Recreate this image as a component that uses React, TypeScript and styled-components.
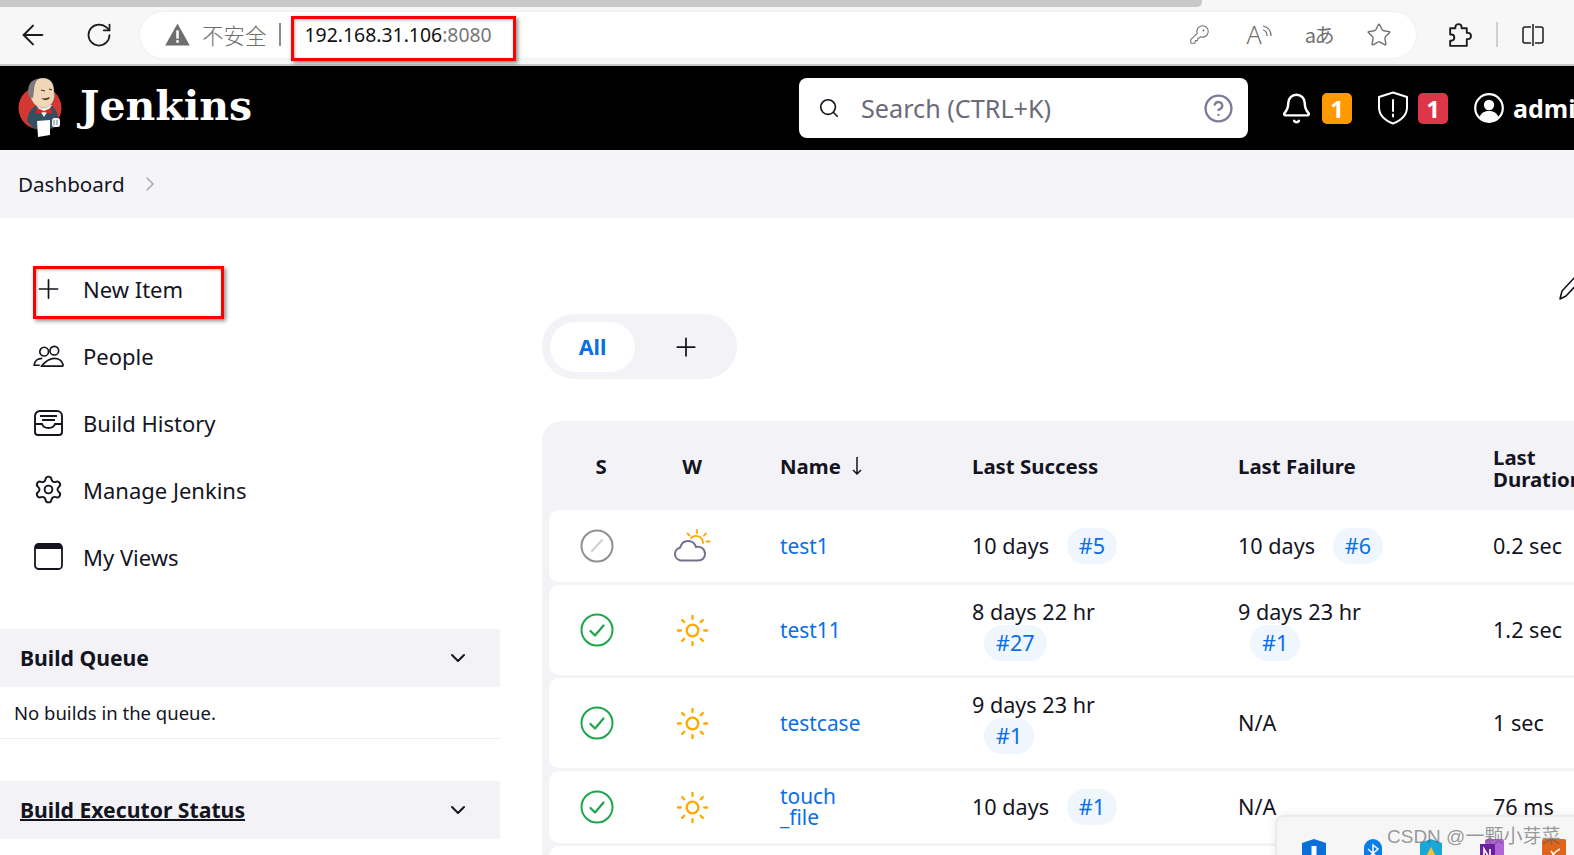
import styled, { createGlobalStyle } from "styled-components";
import {
  ArrowLeft,
  Bell,
  ChevronDown,
  ChevronRight,
  CircleHelp,
  KeyRound,
  Plus,
  RotateCw,
  Search,
  Settings,
  Star,
  Sun,
} from "lucide-react";

const INK = "#14141f";
const BLUE = "#0a6fe6";
const PANEL = "#f2f2f7";
const COLUMNS = "104px 78px 241px 266px 255px 240px";

const GlobalStyle = createGlobalStyle`
  html, body { margin: 0; padding: 0; background: #fff; }
  body { font-family: "Noto Sans", "Noto Sans CJK SC", sans-serif; color: ${INK}; }
  * { box-sizing: border-box; }
`;

const Page = styled.div`
  position: relative;
  width: 1574px;
  height: 855px;
  overflow: hidden;
  background: #fff;
`;

/* browser chrome */
const TabStrip = styled.div`
  height: 7px;
  background: #f7f7f7;
`;
const TabThumb = styled.div`
  width: 1202px;
  height: 7px;
  background: #c9c9c9;
  border-bottom-right-radius: 5px;
`;
const Toolbar = styled.div`
  display: flex;
  align-items: center;
  height: 59px;
  background: #f7f7f7;
  border-bottom: 2px solid #c8c8c8;
  padding-bottom: 2px;
`;
const ToolButton = styled.div`
  display: flex;
  align-items: center;
  justify-content: center;
  width: 66px;
  color: #1c1c1c;
`;
const AddressPill = styled.div`
  display: flex;
  align-items: center;
  width: 1276px;
  height: 46px;
  margin-left: 8px;
  padding: 0 7px 0 25px;
  border-radius: 23px;
  background: #fff;
  box-shadow: 0 0 3px rgba(0, 0, 0, 0.06);
`;
const NotSecure = styled.span`
  margin-left: 12px;
  font-size: 21.5px;
  font-weight: 300;
  color: #6f6f6f;
`;
const PillDivider = styled.div`
  width: 2px;
  height: 23px;
  margin: 0 24px 0 12px;
  background: #8c8c8c;
`;
const Url = styled.span`
  flex: 1;
  font-size: 19.4px;
  color: #111;
`;
const UrlPort = styled.span`
  color: #777;
`;
const PillAction = styled.div`
  display: flex;
  align-items: center;
  justify-content: center;
  width: 60px;
  color: #707070;
`;
const ReadAloudLetter = styled.span`
  font-size: 25px;
  font-weight: 300;
  line-height: 1;
`;
const TranslateGlyph = styled.span`
  font-family: "Noto Sans CJK JP", sans-serif;
  font-size: 20px;
  font-weight: 400;
  letter-spacing: -1.5px;
`;
const ToolbarEnd = styled.div`
  display: flex;
  align-items: center;
  margin-left: 30px;
  color: #1c1c1c;
`;
const ToolDivider = styled.div`
  width: 2px;
  height: 25px;
  margin: 0 23px 0 24px;
  background: #cfcfcf;
`;

/* jenkins header */
const Header = styled.header`
  display: flex;
  align-items: center;
  height: 84px;
  padding-left: 18px;
  background: #000;
  color: #fff;
  & > * {
    flex-shrink: 0;
  }
`;
const Wordmark = styled.span`
  width: 189px;
  margin: 0 0 4px 16px;
  font-family: "DejaVu Serif", serif;
  font-size: 41px;
  font-weight: 700;
  white-space: nowrap;
`;
const SearchBox = styled.div`
  display: flex;
  align-items: center;
  width: 449px;
  height: 60px;
  margin-left: 530px;
  padding: 0 14px 0 19px;
  border-radius: 8px;
  background: #fff;
  color: ${INK};
`;
const SearchHint = styled.span`
  flex: 1;
  margin-left: 21px;
  margin-bottom: 1px;
  font-size: 25.2px;
  color: #6b6b78;
`;
const HeaderAction = styled.div`
  display: flex;
  align-items: center;
  margin-left: ${(p: { $gap: number }) => p.$gap}px;
`;
const CountBadge = styled.span<{ $tone: string }>`
  display: flex;
  align-items: center;
  justify-content: center;
  width: 30px;
  height: 31px;
  margin-left: 9px;
  border-radius: 5px;
  background: ${(p) => p.$tone};
  font-size: 24px;
  font-weight: 700;
`;
const UserName = styled.span`
  margin-left: 9px;
  font-size: 25px;
  font-weight: 700;
  white-space: nowrap;
`;

/* breadcrumb */
const Breadcrumb = styled.nav`
  display: flex;
  align-items: center;
  height: 68px;
  padding-left: 18px;
  background: #f5f5f8;
  font-size: 20.6px;
  color: ${INK};
`;
const CrumbArrow = styled.span`
  display: flex;
  margin-left: 13px;
  color: #a9a9b8;
`;

/* page body */
const Body = styled.div`
  display: flex;
`;
const Sidebar = styled.aside`
  flex: 0 0 500px;
  padding-top: 38px;
`;
const TaskList = styled.ul`
  margin: 0 0 39px;
  padding: 0 0 0 33px;
  list-style: none;
`;
const Task = styled.li`
  display: flex;
  align-items: center;
  height: 66.8px;
  font-size: 22px;
`;
const TaskIcon = styled.span`
  display: flex;
  justify-content: center;
  width: 31px;
  margin-right: 19px;
`;
const PaneHead = styled.div`
  display: flex;
  align-items: center;
  justify-content: space-between;
  height: 58px;
  padding: 0 30px 0 20px;
  background: ${PANEL};
  font-size: 21.2px;
  font-weight: 700;
`;
const PaneLink = styled.span`
  text-decoration: underline;
  text-decoration-thickness: 2px;
`;
const PaneBody = styled.div`
  display: flex;
  align-items: center;
  height: 52px;
  margin-bottom: 42px;
  padding-left: 14px;
  border-bottom: 1px solid #f0f0f3;
  font-size: 18.5px;
`;

const Main = styled.main`
  flex: 1;
  min-width: 0;
  margin-left: 42px;
  padding-top: 57px;
  overflow: hidden;
`;
const EditRow = styled.div`
  display: flex;
  justify-content: flex-end;
  height: 39px;
  margin-right: -14px;
`;
const Tabs = styled.div`
  display: inline-flex;
  align-items: center;
  width: 195px;
  height: 65px;
  padding: 0 8px;
  border-radius: 33px;
  background: ${PANEL};
`;
const ActiveTab = styled.span`
  display: flex;
  align-items: center;
  justify-content: center;
  width: 85px;
  height: 50px;
  border-radius: 25px;
  background: #fff;
  color: ${BLUE};
  font-size: 21.5px;
  font-weight: 700;
`;
const AddTab = styled.span`
  display: flex;
  margin-left: 36px;
`;
const Table = styled.section`
  width: 1120px;
  margin-top: 42px;
  padding: 0 0 0 7px;
  border-radius: 20px 0 0 0;
  background: ${PANEL};
`;
const HeadRow = styled.div`
  display: grid;
  grid-template-columns: ${COLUMNS};
  align-items: center;
  height: 89px;
  font-size: 20.4px;
  font-weight: 700;
  line-height: 22px;
`;
const Row = styled.div`
  display: grid;
  grid-template-columns: ${COLUMNS};
  align-items: center;
  min-height: 72px;
  margin-bottom: 3px;
  padding: 14px 0;
  border-radius: 10px 0 0 10px;
  background: #fff;
  font-size: 21.6px;
  line-height: 26px;
`;
const CenterHead = styled.div`
  text-align: center;
`;
const NameHead = styled.div`
  display: flex;
  align-items: center;
  padding-left: 49px;
`;
const DurationHead = styled.div`
  padding-top: 5px;
`;
const SortArrow = styled.span`
  display: flex;
  margin-left: 9px;
`;
const StatusCell = styled.div`
  display: flex;
  padding-left: 31px;
`;
const WeatherCell = styled.div`
  display: flex;
  justify-content: center;
`;
const JobLink = styled.a`
  padding-left: 49px;
  color: ${BLUE};
  font-size: 20.9px;
  line-height: 21px;
`;
const TimeCell = styled.div`
  padding-right: 80px;
`;
const BuildChip = styled.span`
  display: inline-block;
  margin-left: 12px;
  padding: 5px 12px;
  border-radius: 18px;
  background: #f0f6fe;
  color: ${BLUE};
`;

/* overlays on top of the screenshot */
const AddressMark = styled.div`
  position: absolute;
  left: 291px;
  top: 16px;
  width: 225px;
  height: 45px;
  border: 3px solid #f00;
  box-shadow: 2px 2px 4px rgba(0, 0, 0, 0.45), inset 1px 1px 3px rgba(0, 0, 0, 0.3);
`;
const ItemMark = styled.div`
  position: absolute;
  left: 33px;
  top: 266px;
  width: 191px;
  height: 53px;
  border: 3px solid #f00;
  box-shadow: 2px 2px 4px rgba(0, 0, 0, 0.45), inset 1px 1px 3px rgba(0, 0, 0, 0.3);
`;
const TrayPopup = styled.div`
  position: absolute;
  left: 1275px;
  top: 815px;
  display: flex;
  gap: 38px;
  width: 320px;
  height: 60px;
  padding: 22px 0 0 25px;
  border: 2px solid #ebebeb;
  border-radius: 9px;
  background: #f6f6f6;
  box-shadow: 0 0 8px rgba(0, 0, 0, 0.08);
`;
const Watermark = styled.div`
  position: absolute;
  left: 1387px;
  top: 821px;
  font-family: "Liberation Sans", "Noto Sans CJK SC", sans-serif;
  font-size: 19px;
  color: rgba(90, 90, 90, 0.62);
  white-space: nowrap;
`;

function JenkinsLogo() {
  return (
    <svg width="46" height="64" viewBox="18 76 46 64" aria-hidden="true">
      <circle cx="40" cy="108" r="21.5" fill="#d33833" />
      <path d="M27 121c1-9 6-15 11-16h13c4 3 7 8 8 16l-5 7-5 1H34z" fill="#335061" />
      <path d="M36 105l8 12 8-12z" fill="#f0f0f0" />
      <path d="M37 108l7 3 7-3 1 6-8-2-8 2z" fill="#e2231a" />
      <path d="M30 92c0-9 6-14 13-14s11 5 11 13c0 2 1 5 0 8-2 6-6 9-11 9-7 0-13-7-13-16z" fill="#f0d6b7" stroke="#49728b" strokeWidth="0.3" />
      <path d="M29 97c-2-6-1-14 5-17 2-1 3-1 4-1-3 3-4 8-4 11l-1 8z" fill="#7b7b7b" />
      <path d="M41 98c3 1 6 0 9-1l-1 2c-3 2-6 1-8-1z" fill="#4a3a2e" />
      <path d="M41 90l4 1M49 89l3 1" stroke="#4a3a2e" strokeWidth="1.2" fill="none" />
      <path d="M37 121l13-1v15l-12 2z" fill="#fff" />
      <rect x="52" y="118" width="8" height="9" rx="2.5" fill="#f4f4f4" />
      <path d="M54 120v5M57 120v5" stroke="#49728b" strokeWidth="0.8" />
    </svg>
  );
}

function WarningIcon() {
  return (
    <svg width="25" height="23" viewBox="0 0 24 22" aria-hidden="true">
      <path d="M12 0.5 23.8 21.5H0.2z" fill="#6e6e6e" />
      <rect x="10.8" y="7" width="2.4" height="8" fill="#fff" />
      <rect x="10.8" y="16.5" width="2.4" height="2.4" fill="#fff" />
    </svg>
  );
}

function SoundArcs() {
  return (
    <svg width="10" height="20" viewBox="0 0 10 20" fill="none" stroke="#707070" strokeWidth="1.2" aria-hidden="true">
      <path d="M1 5c2.500.5 4 3 4 6M1 1c5 1 8 5 8 10" />
    </svg>
  );
}

function PuzzleIcon() {
  return (
    <svg width="26" height="26" viewBox="0 0 25 25" fill="none" stroke="#1c1c1c" strokeWidth="1.800" strokeLinejoin="round" aria-hidden="true">
      <path d="M4 6h5V5a3 3 0 0 1 6 0v1h5v4.500h1a3 3 0 0 1 0 6h-1V23H4v-5h1a3 3 0 0 0 0-6H4z" />
    </svg>
  );
}

function SplitIcon() {
  return (
    <svg width="24" height="24" viewBox="0 0 24 24" fill="none" stroke="#1c1c1c" strokeWidth="1.5" aria-hidden="true">
      <path d="M10 4H4a2 2 0 0 0-2 2v12a2 2 0 0 0 2 2h6M14 4h6a2 2 0 0 1 2 2v12a2 2 0 0 1-2 2h-6M12 1v22" />
    </svg>
  );
}

function ShieldIcon() {
  return (
    <svg width="32" height="34" viewBox="0 0 32 34" fill="none" stroke="#fff" strokeWidth="2" strokeLinejoin="round" aria-hidden="true">
      <path d="M16 1.5 30 6v10c0 8-6 13.5-14 16.5C8 29.5 2 24 2 16V6z" />
      <path d="M16 9v11M16 23.5v2" strokeLinecap="round" />
    </svg>
  );
}

function UserIcon() {
  return (
    <svg width="30" height="30" viewBox="0 0 30 30" aria-hidden="true">
      <circle cx="15" cy="15" r="13.8" fill="none" stroke="#fff" strokeWidth="2.2" />
      <circle cx="15" cy="12" r="5.2" fill="#fff" />
      <path d="M5.5 24c2-4.5 5.5-6 9.5-6s7.500 1.500 9.500 6c-2.500 2.800-6 4.500-9.500 4.500S8 26.800 5.500 24z" fill="#fff" />
    </svg>
  );
}

function PeopleIcon() {
  return (
    <svg width="32" height="23" viewBox="0 0 32 23" fill="none" stroke={INK} strokeWidth="1.700" strokeLinejoin="round" aria-hidden="true">
      <circle cx="11.500" cy="6.500" r="4.500" />
      <circle cx="22" cy="5.500" r="4.500" />
      <path d="M9.500 13.500c-4.500 0-8 2.500-8.300 7h5.800" />
      <path d="M8.500 21.500h21.300c1 0 1.500-.8 1.200-1.800-1.300-3.700-4.500-6.200-9-6.200s-8.500 2.500-13.500 8z" />
    </svg>
  );
}

function HistoryIcon() {
  return (
    <svg width="29" height="26" viewBox="0 0 29 26" fill="none" stroke={INK} strokeWidth="1.900" aria-hidden="true">
      <path d="M1 14V6a5 5 0 0 1 5-5h17a5 5 0 0 1 5 5v8M1 14v8a3 3 0 0 0 3 3h21a3 3 0 0 0 3-3v-8" />
      <path d="M1 14h7c1 3 3 4 6.500 4s5.500-1 6.500-4h7" />
      <path d="M6 6h17M8 10h13" />
    </svg>
  );
}

function ViewsIcon() {
  return (
    <svg width="29" height="27" viewBox="0 0 29 27" fill="none" aria-hidden="true">
      <rect x="1" y="1" width="27" height="25" rx="3.500" stroke={INK} strokeWidth="1.800" />
      <path d="M1 5a4 4 0 0 1 4-4h19a4 4 0 0 1 4 4v1H1z" fill={INK} />
    </svg>
  );
}

function PencilIcon() {
  return (
    <svg width="30" height="26" viewBox="0 0 30 26" fill="none" stroke={INK} strokeWidth="1.600" strokeLinejoin="round" aria-hidden="true">
      <path d="M2 24 4 16 18 1l5 4L8 21z" />
    </svg>
  );
}

function DisabledIcon() {
  return (
    <svg width="34" height="34" viewBox="0 0 34 34" fill="none" aria-hidden="true">
      <circle cx="17" cy="17" r="15.500" stroke="#8f8f95" strokeWidth="2" />
      <path d="M12 22l10-11" stroke="#cfcfcf" strokeWidth="2" strokeLinecap="round" />
    </svg>
  );
}

function SuccessIcon() {
  return (
    <svg width="34" height="34" viewBox="0 0 34 34" fill="none" stroke="#1ea64c" strokeWidth="2" aria-hidden="true">
      <circle cx="17" cy="17" r="15.500" />
      <path d="M10.500 18l4.500 4.500 8.500-10" strokeLinecap="round" strokeLinejoin="round" strokeWidth="2.200" />
    </svg>
  );
}

function CloudSunIcon() {
  return (
    <svg width="38" height="34" viewBox="0 0 38 34" fill="none" aria-hidden="true">
      <g stroke="#ffa800" strokeWidth="1.800" strokeLinecap="round">
        <path d="M24 1v3M14.500 4.500l2 2M33 4.500l-2 2M33.500 12.500h3" />
        <path d="M18 9a7 7 0 0 1 12 5" />
      </g>
      <path
        d="M8 31.500a6.500 6.500 0 0 1-1-12.800C8.500 14 12 11.500 16 12c3.500.4 6 2.800 7 6 5-1 9 2 9 7 0 4-3 6.500-6.500 6.500z"
        stroke="#72728a"
        strokeWidth="2"
        fill="#fff"
      />
    </svg>
  );
}

function TrayIcons() {
  return (
    <>
      <svg width="24" height="30" viewBox="0 0 24 30" aria-hidden="true">
        <path d="M12 0 24 4v26H0V4z" fill="#0a6fd8" />
        <rect x="9.500" y="7" width="5" height="23" fill="#fff" />
      </svg>
      <svg width="18" height="30" viewBox="0 0 18 30" aria-hidden="true">
        <rect width="18" height="40" rx="9" fill="#0a7ee8" />
        <path d="M4 10l10 9-5 4V6l5 4-10 9" fill="none" stroke="#fff" strokeWidth="1.500" />
      </svg>
      <svg width="22" height="30" viewBox="0 0 22 30" aria-hidden="true">
        <path d="M11 0 22 4v26H0V4z" fill="#19a7d8" />
        <path d="M11 8l7 13H4z" fill="#f8c12d" />
      </svg>
      <svg width="24" height="30" viewBox="0 0 24 30" aria-hidden="true">
        <rect x="5" y="0" width="19" height="30" rx="2" fill="#b163d8" />
        <rect x="0" y="5" width="15" height="25" fill="#6a1f9e" />
        <path d="M4 20v-10l6 10V10" fill="none" stroke="#fff" strokeWidth="1.600" />
      </svg>
      <svg width="24" height="30" viewBox="0 0 24 30" aria-hidden="true">
        <rect width="24" height="30" rx="2" fill="#e0641a" />
        <path d="M8 20c3-6 6-8 10-10M9 12l7 10" stroke="#fff" strokeWidth="1.500" fill="none" />
      </svg>
    </>
  );
}

const tasks = [
  { label: "New Item", icon: <Plus size={34} strokeWidth={1.3} /> },
  { label: "People", icon: <PeopleIcon /> },
  { label: "Build History", icon: <HistoryIcon /> },
  { label: "Manage Jenkins", icon: <Settings size={31} strokeWidth={1.5} /> },
  { label: "My Views", icon: <ViewsIcon /> },
];

const jobs = [
  { name: "test1", disabled: true, success: ["10 days", "#5"], failure: ["10 days", "#6"], duration: "0.2 sec" },
  { name: "test11", success: ["8 days 22 hr", "#27"], failure: ["9 days 23 hr", "#1"], duration: "1.2 sec" },
  { name: "testcase", success: ["9 days 23 hr", "#1"], failure: null, duration: "1 sec" },
  { name: "touch _file", success: ["10 days", "#1"], failure: null, duration: "76 ms" },
];

function TimeValue({ value }: { value: string[] | null }) {
  if (!value) return <TimeCell>N/A</TimeCell>;
  return (
    <TimeCell>
      {value[0]} <BuildChip>{value[1]}</BuildChip>
    </TimeCell>
  );
}

export default function App() {
  return (
    <Page>
      <GlobalStyle />
      <TabStrip>
        <TabThumb />
      </TabStrip>
      <Toolbar>
        <ToolButton>
          <ArrowLeft size={32} strokeWidth={1.5} />
        </ToolButton>
        <ToolButton>
          <RotateCw size={28} strokeWidth={1.5} />
        </ToolButton>
        <AddressPill>
          <WarningIcon />
          <NotSecure>不安全</NotSecure>
          <PillDivider />
          <Url>
            192.168.31.106<UrlPort>:8080</UrlPort>
          </Url>
          <PillAction>
            <KeyRound size={21} strokeWidth={1.2} />
          </PillAction>
          <PillAction>
            <ReadAloudLetter>A</ReadAloudLetter>
            <SoundArcs />
          </PillAction>
          <PillAction>
            <TranslateGlyph>aあ</TranslateGlyph>
          </PillAction>
          <PillAction>
            <Star size={26} strokeWidth={1.3} />
          </PillAction>
        </AddressPill>
        <ToolbarEnd>
          <PuzzleIcon />
          <ToolDivider />
          <SplitIcon />
        </ToolbarEnd>
      </Toolbar>

      <Header>
        <JenkinsLogo />
        <Wordmark>Jenkins</Wordmark>
        <SearchBox>
          <Search size={22} strokeWidth={1.8} />
          <SearchHint>Search (CTRL+K)</SearchHint>
          <CircleHelp size={31} strokeWidth={1.8} color="#7c7c98" />
        </SearchBox>
        <HeaderAction $gap={32}>
          <Bell size={33} strokeWidth={1.8} />
          <CountBadge $tone="#fe9a00">1</CountBadge>
        </HeaderAction>
        <HeaderAction $gap={25}>
          <ShieldIcon />
          <CountBadge $tone="#dc3648">1</CountBadge>
        </HeaderAction>
        <HeaderAction $gap={26}>
          <UserIcon />
          <UserName>admin</UserName>
        </HeaderAction>
      </Header>

      <Breadcrumb>
        Dashboard
        <CrumbArrow>
          <ChevronRight size={24} strokeWidth={1.6} />
        </CrumbArrow>
      </Breadcrumb>

      <Body>
        <Sidebar>
          <TaskList>
            {tasks.map((task) => (
              <Task key={task.label}>
                <TaskIcon>{task.icon}</TaskIcon>
                {task.label}
              </Task>
            ))}
          </TaskList>
          <PaneHead>
            Build Queue
            <ChevronDown size={24} strokeWidth={2} />
          </PaneHead>
          <PaneBody>No builds in the queue.</PaneBody>
          <PaneHead>
            <PaneLink>Build Executor Status</PaneLink>
            <ChevronDown size={24} strokeWidth={2} />
          </PaneHead>
        </Sidebar>

        <Main>
          <EditRow>
            <PencilIcon />
          </EditRow>
          <Tabs>
            <ActiveTab>All</ActiveTab>
            <AddTab>
              <Plus size={30} strokeWidth={1.4} />
            </AddTab>
          </Tabs>
          <Table>
            <HeadRow>
              <CenterHead>S</CenterHead>
              <CenterHead>W</CenterHead>
              <NameHead>
                Name
                <SortArrow>
                  <svg width="14" height="20" viewBox="0 0 14 20" fill="none" stroke={INK} strokeWidth="1.500" aria-hidden="true">
                    <path d="M7 1v17M3 14l4 4 4-4" />
                  </svg>
                </SortArrow>
              </NameHead>
              <div>Last Success</div>
              <div>Last Failure</div>
              <DurationHead>
                Last
                <br />
                Duration
              </DurationHead>
            </HeadRow>
            {jobs.map((job) => (
              <Row key={job.name}>
                <StatusCell>{job.disabled ? <DisabledIcon /> : <SuccessIcon />}</StatusCell>
                <WeatherCell>
                  {job.disabled ? <CloudSunIcon /> : <Sun size={35} strokeWidth={1.6} color="#ffa800" />}
                </WeatherCell>
                <JobLink>
                  {job.name.split(" ").map((part) => (
                    <div key={part}>{part}</div>
                  ))}
                </JobLink>
                <TimeValue value={job.success} />
                <TimeValue value={job.failure} />
                <div>{job.duration}</div>
              </Row>
            ))}
            <Row />
          </Table>
        </Main>
      </Body>

      <AddressMark />
      <ItemMark />
      <TrayPopup>
        <TrayIcons />
      </TrayPopup>
      <Watermark>CSDN @一颗小芽菜</Watermark>
    </Page>
  );
}
